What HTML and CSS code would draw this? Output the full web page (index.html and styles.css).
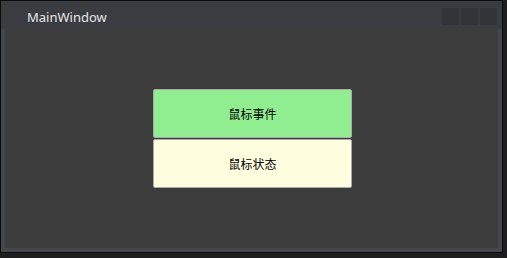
FILE: index.html
```html
<!DOCTYPE html>
<html>
<head>
<meta charset="utf-8">
<link rel="stylesheet" href="styles.css">
</head>
<body>
<div class="window">
  <div class="titlebar">
    <span class="title">MainWindow</span>
    <div class="controls">
      <span class="ctl"></span>
      <span class="ctl"></span>
      <span class="ctl"></span>
    </div>
  </div>
  <div class="frame">
    <div class="content">
      <div class="stack">
        <button class="btn green">鼠标事件</button>
        <button class="btn yellow">鼠标状态</button>
      </div>
    </div>
  </div>
</div>
</body>
</html>
```
FILE: styles.css
```css
html, body {
  margin: 0;
  padding: 0;
  background: #1e1e1f;
  width: 507px;
  height: 258px;
  overflow: hidden;
}
.window {
  width: 503px;
  height: 253px;
  box-sizing: border-box;
  border: 1px solid #0b0b0c;
  background: #46474c;
  display: flex;
  flex-direction: column;
}
.titlebar {
  height: 28px;
  background: #3b3c41;
  display: flex;
  align-items: center;
  justify-content: space-between;
  padding: 0 5px 0 26px;
  flex: none;
}
.title {
  font-family: "Noto Sans", "Noto Sans CJK SC", sans-serif;
  font-size: 13px;
  color: #e6e6e6;
  margin-top: 4px;
}
.controls {
  display: flex;
  gap: 2px;
  margin-top: 2px;
}
.ctl {
  width: 17px;
  height: 17px;
  background: #333438;
}
.frame {
  flex: 1;
  padding: 0 4px 4px 4px;
  display: flex;
}
.content {
  flex: 1;
  background: #3c3c3c;
  display: flex;
  align-items: center;
  justify-content: center;
}
.stack {
  display: flex;
  flex-direction: column;
  gap: 1px;
  margin-left: 2px;
}
.btn {
  width: 199px;
  height: 49px;
  box-sizing: border-box;
  border: 1px solid #a9a9a9;
  border-radius: 2px;
  font-family: "Noto Sans CJK SC", sans-serif;
  font-size: 12px;
  color: #000;
  padding: 0;
}
.green { background: #90ee90; }
.yellow { background: #ffffe0; }
```
